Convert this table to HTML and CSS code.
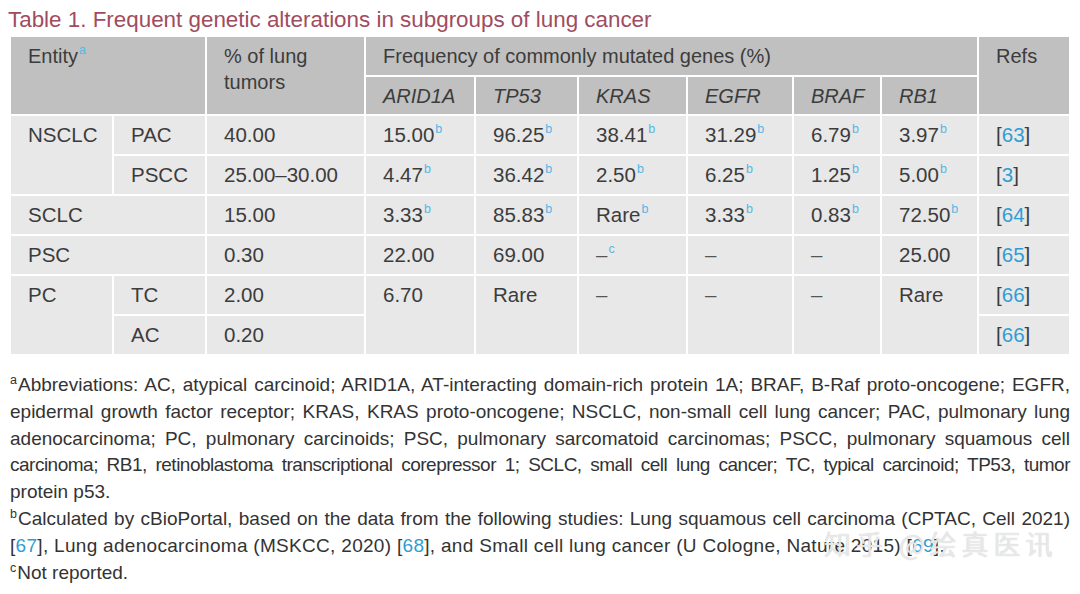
FILE: index.html
```html
<!DOCTYPE html>
<html lang="en">
<head>
<meta charset="utf-8">
<title>Table 1</title>
<link rel="stylesheet" href="styles.css">
</head>
<body>
<div class="page">
  <h1 class="title">Table 1. Frequent genetic alterations in subgroups of lung cancer</h1>
  <table class="data">
    <colgroup>
      <col class="c1"><col class="c2"><col class="c3"><col class="c4"><col class="c5">
      <col class="c6"><col class="c7"><col class="c8"><col class="c9"><col class="c10">
    </colgroup>
    <thead>
      <tr class="h1">
        <th colspan="2" rowspan="2">Entity<sup class="fn">a</sup></th>
        <th rowspan="2">% of lung<br>tumors</th>
        <th colspan="6">Frequency of commonly mutated genes (%)</th>
        <th rowspan="2">Refs</th>
      </tr>
      <tr class="h2">
        <th class="gene">ARID1A</th>
        <th class="gene">TP53</th>
        <th class="gene">KRAS</th>
        <th class="gene">EGFR</th>
        <th class="gene">BRAF</th>
        <th class="gene">RB1</th>
      </tr>
    </thead>
    <tbody>
      <tr>
        <td rowspan="2">NSCLC</td>
        <td>PAC</td>
        <td>40.00</td>
        <td>15.00<sup class="fn">b</sup></td>
        <td>96.25<sup class="fn">b</sup></td>
        <td>38.41<sup class="fn">b</sup></td>
        <td>31.29<sup class="fn">b</sup></td>
        <td>6.79<sup class="fn">b</sup></td>
        <td>3.97<sup class="fn">b</sup></td>
        <td>[<span class="ref">63</span>]</td>
      </tr>
      <tr>
        <td>PSCC</td>
        <td>25.00–30.00</td>
        <td>4.47<sup class="fn">b</sup></td>
        <td>36.42<sup class="fn">b</sup></td>
        <td>2.50<sup class="fn">b</sup></td>
        <td>6.25<sup class="fn">b</sup></td>
        <td>1.25<sup class="fn">b</sup></td>
        <td>5.00<sup class="fn">b</sup></td>
        <td>[<span class="ref">3</span>]</td>
      </tr>
      <tr>
        <td colspan="2">SCLC</td>
        <td>15.00</td>
        <td>3.33<sup class="fn">b</sup></td>
        <td>85.83<sup class="fn">b</sup></td>
        <td>Rare<sup class="fn">b</sup></td>
        <td>3.33<sup class="fn">b</sup></td>
        <td>0.83<sup class="fn">b</sup></td>
        <td>72.50<sup class="fn">b</sup></td>
        <td>[<span class="ref">64</span>]</td>
      </tr>
      <tr>
        <td colspan="2">PSC</td>
        <td>0.30</td>
        <td>22.00</td>
        <td>69.00</td>
        <td><span class="dash">–</span><sup class="fn">c</sup></td>
        <td><span class="dash">–</span></td>
        <td><span class="dash">–</span></td>
        <td>25.00</td>
        <td>[<span class="ref">65</span>]</td>
      </tr>
      <tr>
        <td rowspan="2">PC</td>
        <td>TC</td>
        <td>2.00</td>
        <td rowspan="2">6.70</td>
        <td rowspan="2">Rare</td>
        <td rowspan="2"><span class="dash">–</span></td>
        <td rowspan="2"><span class="dash">–</span></td>
        <td rowspan="2"><span class="dash">–</span></td>
        <td rowspan="2">Rare</td>
        <td>[<span class="ref">66</span>]</td>
      </tr>
      <tr>
        <td>AC</td>
        <td>0.20</td>
        <td>[<span class="ref">66</span>]</td>
      </tr>
    </tbody>
  </table>

  <div class="notes">
    <div class="line j"><sup class="nf">a</sup>Abbreviations: AC, atypical carcinoid; ARID1A, AT-interacting domain-rich protein 1A; BRAF, B-Raf proto-oncogene; EGFR,</div>
    <div class="line j">epidermal growth factor receptor; KRAS, KRAS proto-oncogene; NSCLC, non-small cell lung cancer; PAC, pulmonary lung</div>
    <div class="line j">adenocarcinoma; PC, pulmonary carcinoids; PSC, pulmonary sarcomatoid carcinomas; PSCC, pulmonary squamous cell</div>
    <div class="line j tight">carcinoma; RB1, retinoblastoma transcriptional corepressor 1; SCLC, small cell lung cancer; TC, typical carcinoid; TP53, tumor</div>
    <div class="line">protein p53.</div>
    <div class="line j"><sup class="nf">b</sup>Calculated by cBioPortal, based on the data from the following studies: Lung squamous cell carcinoma (CPTAC, Cell 2021)</div>
    <div class="line wide">[<span class="ref">67</span>], Lung adenocarcinoma (MSKCC, 2020) [<span class="ref">68</span>], and Small cell lung cancer (U Cologne, Nature 2015) [<span class="ref">69</span>].</div>
    <div class="line"><sup class="nf">c</sup>Not reported.</div>
  </div>

  <div class="watermark">知乎 @绘真医讯</div>
</div>
</body>
</html>
```

FILE: styles.css
```css
html, body {
  margin: 0;
  padding: 0;
  background: #ffffff;
}

body {
  font-family: "Liberation Sans", Arial, "Noto Sans CJK SC", sans-serif;
  color: #3a3a3a;
}

.page {
  position: relative;
  width: 1080px;
  height: 594px;
  padding: 6px 0 0 8px;
  box-sizing: border-box;
  overflow: hidden;
}

.title {
  margin: 0;
  font-size: 22.4px;
  line-height: 28px;
  font-weight: normal;
  color: #a04c60;
  white-space: nowrap;
}

.data {
  margin: 1px 0 0 1px;
  border-collapse: separate;
  border-spacing: 2px;
  table-layout: fixed;
  width: 1062px;
  font-size: 20.5px;
  color: #3c3c3c;
}

.c1 { width: 101px; }
.c2 { width: 91px; }
.c3 { width: 157px; }
.c4 { width: 108px; }
.c5 { width: 101px; }
.c6 { width: 107px; }
.c7 { width: 104px; }
.c8 { width: 86px; }
.c9 { width: 95px; }
.c10 { width: 90px; }

.data th,
.data td {
  text-align: left;
  vertical-align: top;
  font-weight: normal;
  line-height: 26px;
  padding: 6px 8px 6px 17px;
  white-space: nowrap;
}

.data th {
  background: #c0c0c0;
  font-size: 20px;
}

.data .h2 th {
  padding-bottom: 5px;
}

.data td {
  background: #e8e8e8;
}

.gene {
  font-style: italic;
}

.fn {
  font-size: 12.5px;
  line-height: 0;
  vertical-align: 9px;
  color: #5ab6e0;
  margin-left: 1px;
}

.ref {
  color: #2f9dd4;
}

.dash {
  color: #555;
}

.notes {
  margin: 16px 0 0 2px;
  width: 1060px;
  font-size: 19px;
  line-height: 26.8px;
  color: #333333;
}

.line {
  white-space: nowrap;
}

.line.j {
  text-align: justify;
  text-align-last: justify;
  word-spacing: -1px;
}

.line.tight {
  letter-spacing: -0.5px;
  word-spacing: -2.5px;
}

.line.wide {
  letter-spacing: 0.3px;
}

.nf {
  font-size: 12.5px;
  line-height: 0;
  vertical-align: 7px;
  margin-right: 1px;
}

.watermark {
  position: absolute;
  left: 824px;
  top: 527px;
  font-family: "Noto Sans CJK SC", sans-serif;
  font-size: 27px;
  line-height: 34px;
  letter-spacing: 5px;
  color: rgba(246, 246, 246, 0.75);
  text-shadow: 0 0 1px #bcbcbc;
  white-space: nowrap;
}
```
